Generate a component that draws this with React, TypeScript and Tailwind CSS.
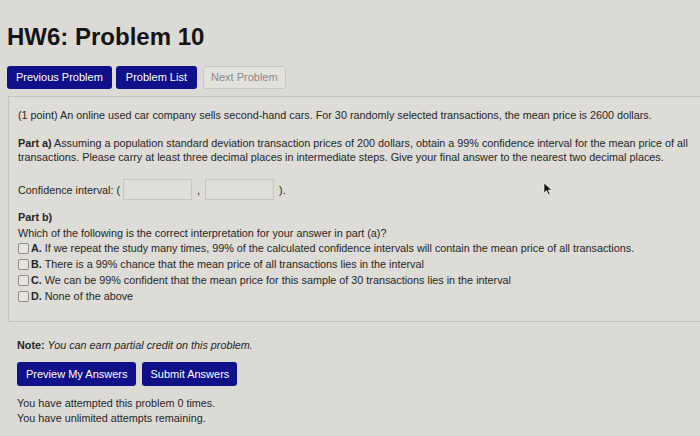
import { useState } from 'react'

const choices = [
  ['A.', 'If we repeat the study many times, 99% of the calculated confidence intervals will contain the mean price of all transactions.'],
  ['B.', 'There is a 99% chance that the mean price of all transactions lies in the interval'],
  ['C.', 'We can be 99% confident that the mean price for this sample of 30 transactions lies in the interval'],
  ['D.', 'None of the above'],
]

export default function App(){
  const [lo, setLo] = useState('')
  const [hi, setHi] = useState('')
  const [picked, setPicked] = useState<string[]>([])

  const toggle = (k:string) => setPicked(p => p.includes(k) ? p.filter(x=>x!==k) : [...p, k])

  return (
    <div className="w-[700px] h-[436px] overflow-hidden bg-[#dbdad5] text-[#262626] font-['Liberation_Sans',Arial,sans-serif] pl-[7px] pt-[24px]">
      <h1 className="text-[24px] leading-[26px] font-bold text-[#141414]">HW6: Problem 10</h1>

      <div className="flex gap-[4px] mt-[16px] text-[11px]">
        <button className="h-[23px] px-[9px] rounded-[3px] bg-[#10108a] text-white">Previous Problem</button>
        <button className="h-[23px] px-[10px] rounded-[3px] bg-[#10108a] text-white">Problem List</button>
        <button className="h-[23px] px-[7px] rounded-[3px] border border-[#c8c7c2] bg-[#e2e1dc] text-[#8a8a8a] ml-[2px]">Next Problem</button>
      </div>

      <div className="mt-[7px] ml-[1px] border border-[#c4c3be] bg-[#dddcd7] pl-[9px] pt-[11px] pb-[18px] w-[720px] text-[10.8px] leading-[14px]">
        <p>(1 point) An online used car company sells second-hand cars. For 30 randomly selected transactions, the mean price is 2600 dollars.</p>

        <p className="mt-[14px] w-[690px]"><b>Part a)</b> Assuming a population standard deviation transaction prices of 200 dollars, obtain a 99% confidence interval for the mean price of all transactions. Please carry at least three decimal places in intermediate steps. Give your final answer to the nearest two decimal places.</p>

        <div className="flex items-center mt-[15px] relative">
          <span>Confidence interval: (</span>
          <input value={lo} onChange={e=>setLo(e.target.value)} className="ml-[3px] w-[69px] h-[21px] border border-[#c6c5c0] bg-[#dfded9] outline-none px-1" />
          <span className="mx-[5px]">,</span>
          <input value={hi} onChange={e=>setHi(e.target.value)} className="w-[69px] h-[21px] border border-[#c6c5c0] bg-[#dfded9] outline-none px-1" />
          <span className="ml-[5px]">).</span>
          <svg className="absolute left-[525px] top-[3px]" width="10" height="14" viewBox="0 0 10 14">
            <path d="M1 1 L1 11 L3.6 8.6 L5.4 12.6 L7 11.9 L5.3 8 L8.8 8 Z" fill="#111" stroke="#fff" strokeWidth="0.6" />
          </svg>
        </div>

        <p className="mt-[10px] font-bold">Part b)</p>
        <p className="mt-[2px]">Which of the following is the correct interpretation for your answer in part (a)?</p>
        <div className="flex flex-col gap-[2px] mt-[1px]">
          {choices.map(([k, t]) => (
            <label key={k} className="flex items-center cursor-pointer">
              <span onClick={()=>toggle(k)} className={`w-[11px] h-[11px] border border-[#8e8d89] rounded-[2px] mr-[2px] ${picked.includes(k) ? 'bg-[#10108a]' : 'bg-[#e4e3de]'}`}></span>
              <span><b>{k}</b> {t}</span>
            </label>
          ))}
        </div>
      </div>

      <div className="pl-[10px] text-[10.8px] leading-[14px]">
        <p className="mt-[16px]"><b>Note:</b> <i>You can earn partial credit on this problem.</i></p>
        <div className="flex gap-[6px] mt-[10px] text-[11px]">
          <button className="h-[24px] px-[9px] rounded-[3px] bg-[#10108a] text-white">Preview My Answers</button>
          <button className="h-[24px] px-[8px] rounded-[3px] bg-[#10108a] text-white">Submit Answers</button>
        </div>
        <p className="mt-[10px]">You have attempted this problem 0 times.</p>
        <p className="mt-[1px]">You have unlimited attempts remaining.</p>
      </div>
    </div>
  )
}
